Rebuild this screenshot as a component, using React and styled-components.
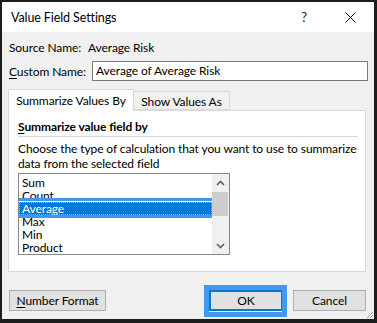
import React from "react";
import styled, { createGlobalStyle } from "styled-components";

const Global = createGlobalStyle`
  html, body { margin: 0; padding: 0; background: #f0f0f0; }
  * { box-sizing: border-box; }
  body {
    font-family: Lato, "Noto Sans", sans-serif;
    font-size: 12px;
    letter-spacing: -0.1px;
    color: #000;
    white-space: nowrap;
  }
`;

const Frame = styled.div`
  position: relative;
  width: 377px;
  height: 323px;
  border-style: solid;
  border-color: #1d1d1d;
  border-width: 2px 3px 4px 2px;
  background: #f0f0f0;
  display: flex;
  flex-direction: column;
`;

const TitleBar = styled.div`
  height: 30px;
  background: #fff;
  display: flex;
  align-items: center;
  padding: 0 18px 0 9px;
`;

const Title = styled.div`
  flex: 1;
  font-size: 12.5px;
`;

const Help = styled.div`
  width: 12px;
  text-align: center;
  font-size: 13px;
  color: #222;
  margin-right: 35px;
`;

const Body = styled.div`
  flex: 1;
  display: flex;
  flex-direction: column;
  padding: 7px 6px 0 6px;
`;

const Row = styled.div`
  display: flex;
  align-items: center;
  height: ${(p) => p.$h || 16}px;
  padding-left: 1px;
  margin-top: ${(p) => p.$mt || 0}px;
`;

const Label = styled.span`
  width: ${(p) => p.$w}px;
  flex: none;
`;

const Input = styled.div`
  flex: 1;
  height: 20px;
  border: 1px solid #7a7a7a;
  background: #fff;
  padding: 0 0 0 3px;
  line-height: 18px;
`;

const U = styled.span`
  text-decoration: underline;
  text-underline-offset: 2px;
`;

const Tabs = styled.div`
  display: flex;
  align-items: flex-end;
  margin-top: 8px;
  height: 21px;
  position: relative;
  z-index: 1;
`;

const Tab = styled.div`
  width: ${(p) => p.$w}px;
  height: ${(p) => (p.$active ? 22 : 19)}px;
  border: 1px solid #d9d9d9;
  border-bottom: ${(p) => (p.$active ? "none" : "1px solid #d9d9d9")};
  border-left: ${(p) => (p.$active ? "1px solid #d9d9d9" : "none")};
  background: ${(p) => (p.$active ? "#fff" : "#f0f0f0")};
  margin-bottom: ${(p) => (p.$active ? -1 : 0)}px;
  display: flex;
  align-items: center;
  justify-content: center;
  padding-top: ${(p) => (p.$active ? 0 : 1)}px;
`;

const Panel = styled.div`
  height: 162px;
  margin-right: 2px;
  background: #fff;
  border: 1px solid #d9d9d9;
  padding: 8px 7px 0 9px;
  display: flex;
  flex-direction: column;
`;

const Heading = styled.div`
  font-weight: bold;
  line-height: 16px;
  padding-bottom: 1px;
  border-bottom: 1px solid #d8d8d8;
`;

const Desc = styled.div`
  margin-top: 4px;
  line-height: 15px;
`;

const ListBox = styled.div`
  margin-top: 2px;
  width: 212px;
  height: 82px;
  border: 1px solid #828790;
  display: flex;
  position: relative;
`;

const Items = styled.div`
  flex: 1;
  padding-top: 2px;
  overflow: hidden;
`;

const Item = styled.div`
  position: relative;
  height: 13px;
  line-height: 13px;
  padding-left: 3px;
  background: ${(p) => (p.$sel ? "#0078d7" : "transparent")};
  color: ${(p) => (p.$sel ? "#fff" : "#000")};
  ${(p) =>
    p.$sel &&
    `
    outline: 1px dotted #e8a94c;
    outline-offset: -1px;
    &::after {
      content: "";
      position: absolute;
      left: -4px;
      right: -3px;
      top: -4px;
      bottom: -3px;
      border: 3px solid #4298ef;
    }
  `}
`;

const ScrollBar = styled.div`
  width: 17px;
  background: #f0f0f0;
  display: flex;
  flex-direction: column;
`;

const Arrow = styled.div`
  height: 17px;
  display: flex;
  align-items: center;
  justify-content: center;
`;

const Thumb = styled.div`
  height: 24px;
  margin: 1px 1px 0 0;
  background: #cdcdcd;
`;

const Track = styled.div`
  flex: 1;
`;

const ButtonRow = styled.div`
  display: flex;
  margin-top: 18px;
  padding: 0 2px 0 1px;
  gap: 10px;
`;

const Button = styled.div`
  position: relative;
  width: ${(p) => p.$w}px;
  height: 21px;
  background: #e1e1e1;
  border: ${(p) => (p.$default ? "2px solid #0078d7" : "1px solid #adadad")};
  display: flex;
  align-items: center;
  justify-content: center;
  margin-right: ${(p) => (p.$push ? "auto" : "0")};
  ${(p) =>
    p.$default &&
    `
    &::after {
      content: "";
      position: absolute;
      left: -7px;
      right: -6px;
      top: -7px;
      bottom: -8px;
      border: 5px solid #4298ef;
    }
  `}
`;

const Grip = styled.svg`
  position: absolute;
  right: 0;
  bottom: 0;
`;

const Chevron = ({ up }) => (
  <svg width="9" height="6" viewBox="0 0 9 6">
    <path
      d={up ? "M1 5 L4.5 1.5 L8 5" : "M1 1 L4.5 4.5 L8 1"}
      fill="none"
      stroke="#606060"
      strokeWidth="1.6"
    />
  </svg>
);

export default function App() {
  const items = ["Sum", "Count", "Average", "Max", "Min", "Product"];
  return (
    <>
      <Global />
      <Frame>
        <TitleBar>
          <Title>Value Field Settings</Title>
          <Help>?</Help>
          <svg width="11" height="11" viewBox="0 0 11 11">
            <path d="M0.5 0.5 L10.5 10.5 M10.5 0.5 L0.5 10.5" stroke="#000" strokeWidth="1" />
          </svg>
        </TitleBar>
        <Body>
          <Row>
            <Label $w={79}>Source Name:</Label>
            <span>Average Risk</span>
          </Row>
          <Row $h={20} $mt={6}>
            <Label $w={83}>
              <U>C</U>ustom Name:
            </Label>
            <Input>Average of Average Risk</Input>
          </Row>
          <Tabs>
            <Tab $w={126} $active>Summarize Values By</Tab>
            <Tab $w={96}>Show Values As</Tab>
          </Tabs>
          <Panel>
            <Heading>
              <U>S</U>ummarize value field by
            </Heading>
            <Desc>
              Choose the type of calculation that you want to use to summarize
              <br />
              data from the selected field
            </Desc>
            <ListBox>
              <Items>
                {items.map((it) => (
                  <Item key={it} $sel={it === "Average"}>
                    {it}
                  </Item>
                ))}
              </Items>
              <ScrollBar>
                <Arrow>
                  <Chevron up />
                </Arrow>
                <Thumb />
                <Track />
                <Arrow>
                  <Chevron />
                </Arrow>
              </ScrollBar>
            </ListBox>
          </Panel>
          <ButtonRow>
            <Button $w={97} $push>
              <span>
                <U>N</U>umber Format
              </span>
            </Button>
            <Button $w={74} $default>OK</Button>
            <Button $w={73}>Cancel</Button>
          </ButtonRow>
        </Body>
        <Grip width="10" height="10" viewBox="0 0 10 10">
          <path d="M9 3 L3 9 M9 6 L6 9" stroke="#a0a0a0" strokeWidth="1" />
        </Grip>
      </Frame>
    </>
  );
}
